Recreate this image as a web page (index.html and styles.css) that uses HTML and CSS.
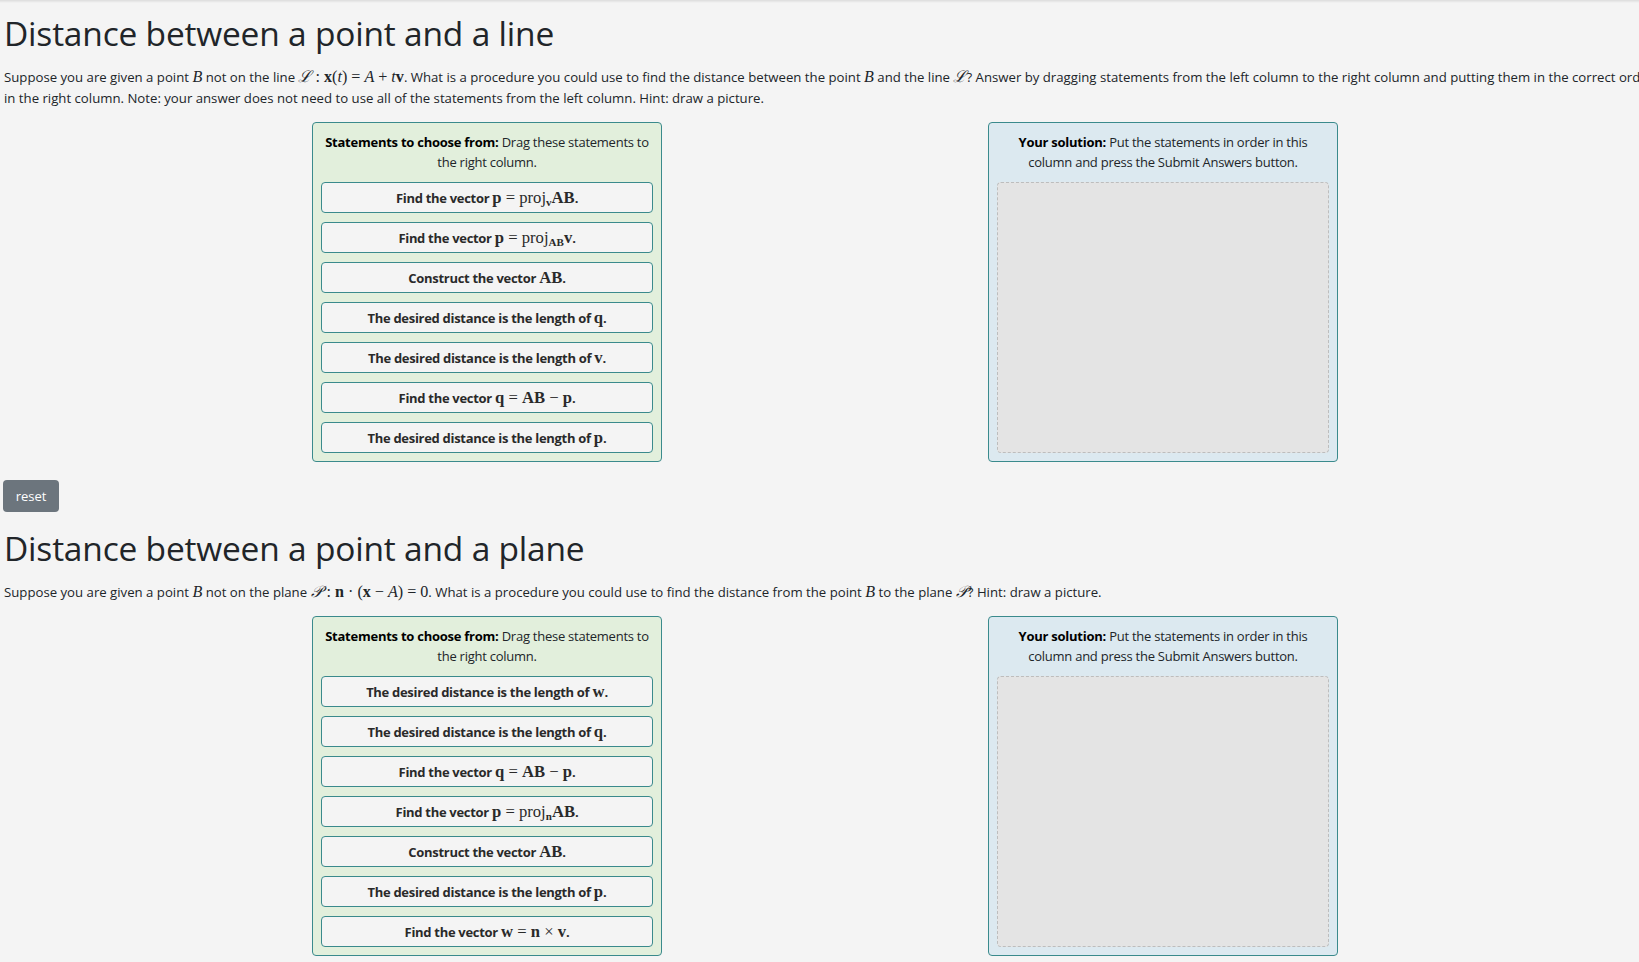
FILE: index.html
```html
<!DOCTYPE html>
<html>
<head>
    <title>Distance problems</title>
    <link rel="stylesheet" href="styles.css">
</head>
<body>
<div class="topline"></div>

<div class="page">
    <div class="question">
        <h1>Distance between a point and a line</h1>
        <p class="prompt">Suppose you are given a point <span class="mi">B</span> not on the line <span class="ms">ℒ</span><span class="mr"> : </span><span class="mb">x</span><span class="mr">(</span><span class="mi">t</span><span class="mr">) = </span><span class="mi">A</span><span class="mr"> + </span><span class="mi">t</span><span class="mb">v</span>. What is a procedure you could use to find the distance between the point <span class="mi">B</span> and the line <span class="ms">ℒ</span>? Answer by dragging statements from the left column to the right column and putting them in the correct order in the right column. Note: your answer does not need to use all of the statements from the left column. Hint: draw a picture.</p>

        <div class="order-blocks">
            <div class="col-box source">
                <div class="col-title"><strong>Statements to choose from:</strong> Drag these statements to the right column.</div>
                <div class="block">Find the vector <span class="mb">p</span><span class="mr"> = proj</span><sub class="mb">v</sub><span class="mb">AB</span>.</div>
                <div class="block">Find the vector <span class="mb">p</span><span class="mr"> = proj</span><sub class="mb">AB</sub><span class="mb">v</span>.</div>
                <div class="block">Construct the vector <span class="mb">AB</span>.</div>
                <div class="block">The desired distance is the length of <span class="mb">q</span>.</div>
                <div class="block">The desired distance is the length of <span class="mb">v</span>.</div>
                <div class="block">Find the vector <span class="mb">q</span><span class="mr"> = </span><span class="mb">AB</span><span class="mr"> − </span><span class="mb">p</span>.</div>
                <div class="block">The desired distance is the length of <span class="mb">p</span>.</div>
            </div>
            <div class="col-box answer">
                <div class="col-title"><strong>Your solution:</strong> Put the statements in order in this column and press the Submit Answers button.</div>
                <div class="dropzone"></div>
            </div>
        </div>

        <button class="btn-reset">reset</button>
    </div>

    <div class="question">
        <h1>Distance between a point and a plane</h1>
        <p class="prompt">Suppose you are given a point <span class="mi">B</span> not on the plane <span class="ms">𝒫</span><span class="mr"> : </span><span class="mb">n</span><span class="mr"> · (</span><span class="mb">x</span><span class="mr"> − </span><span class="mi">A</span><span class="mr">) = 0</span>. What is a procedure you could use to find the distance from the point <span class="mi">B</span> to the plane <span class="ms">𝒫</span>? Hint: draw a picture.</p>

        <div class="order-blocks">
            <div class="col-box source">
                <div class="col-title"><strong>Statements to choose from:</strong> Drag these statements to the right column.</div>
                <div class="block">The desired distance is the length of <span class="mb">w</span>.</div>
                <div class="block">The desired distance is the length of <span class="mb">q</span>.</div>
                <div class="block">Find the vector <span class="mb">q</span><span class="mr"> = </span><span class="mb">AB</span><span class="mr"> − </span><span class="mb">p</span>.</div>
                <div class="block">Find the vector <span class="mb">p</span><span class="mr"> = proj</span><sub class="mb">n</sub><span class="mb">AB</span>.</div>
                <div class="block">Construct the vector <span class="mb">AB</span>.</div>
                <div class="block">The desired distance is the length of <span class="mb">p</span>.</div>
                <div class="block">Find the vector <span class="mb">w</span><span class="mr"> = </span><span class="mb">n</span><span class="mr"> × </span><span class="mb">v</span>.</div>
            </div>
            <div class="col-box answer">
                <div class="col-title"><strong>Your solution:</strong> Put the statements in order in this column and press the Submit Answers button.</div>
                <div class="dropzone"></div>
            </div>
        </div>
    </div>
</div>

</body>
</html>
```

FILE: styles.css
```css
html, body {
    margin: 0;
    padding: 0;
    overflow-x: hidden;
}
body {
    background: #f4f4f4;
    color: #212529;
    font-family: "Open Sans", "Noto Sans", sans-serif;
    font-size: 13.5px;
    line-height: 21px;
}
.topline {
    height: 3px;
    background: linear-gradient(#dcdcdc, #f4f4f4);
}
.page {
    width: 1662px;
    padding: 0 4px;
}
.question h1 {
    font-size: 33.5px;
    font-weight: 500;
    line-height: 48px;
    margin: 6px 0 9px;
    letter-spacing: -0.2px;
}
.question + .question h1 {
    margin-top: 12px;
}
.prompt {
    margin: 0 0 13px;
    font-size: 13.2px;
}

/* math */
.mi, .mb, .mr, .ms {
    font-family: "Liberation Serif", "DejaVu Serif", serif;
    font-size: 1.22em;
    letter-spacing: 0;
}
.block .mi, .block .mb, .block .mr {
    font-size: 1.28em;
}
.mi { font-style: italic; }
.mb { font-weight: bold; }
.mr { font-weight: normal; }
.ms { font-style: italic; }
sub.mb {
    font-size: 0.8em;
    vertical-align: -3px;
    line-height: 0;
}
.block sub.mb {
    font-size: 0.85em;
}

/* order blocks */
.order-blocks {
    display: flex;
    align-items: stretch;
    gap: 326px;
    padding-left: 308px;
}
.col-box {
    width: 332px;
    padding: 9px 8px 8px 8px;
    border: 1px solid #3a8a8c;
    border-radius: 4px;
    display: flex;
    flex-direction: column;
    gap: 9px;
}
.source { background: #e2efdc; }
.answer { background: #dce9f0; }
.col-title {
    text-align: center;
    line-height: 20px;
    margin: 0 -4px 1px;
    font-size: 13px;
    letter-spacing: -0.25px;
}
.answer .col-title {
    padding: 0 16px;
}
.col-title strong {
    font-weight: 700;
    color: #000;
}
.block {
    height: 29px;
    line-height: 29px;
    border: 1px solid #3a8a8c;
    border-radius: 4px;
    background: #f4f4f4;
    text-align: center;
    font-weight: 700;
    font-size: 13px;
    letter-spacing: -0.3px;
    color: #2a2a2a;
}
.dropzone {
    flex: 1;
    background: #e4e4e4;
    border: 1px dashed #bdbdbd;
    border-radius: 4px;
}
.btn-reset {
    margin: 18px 0 0 -1px;
    height: 32px;
    width: 56px;
    background: #6c757d;
    color: #fff;
    border: none;
    border-radius: 4px;
    font-family: "Open Sans", sans-serif;
    font-size: 13px;
    cursor: pointer;
}
```
